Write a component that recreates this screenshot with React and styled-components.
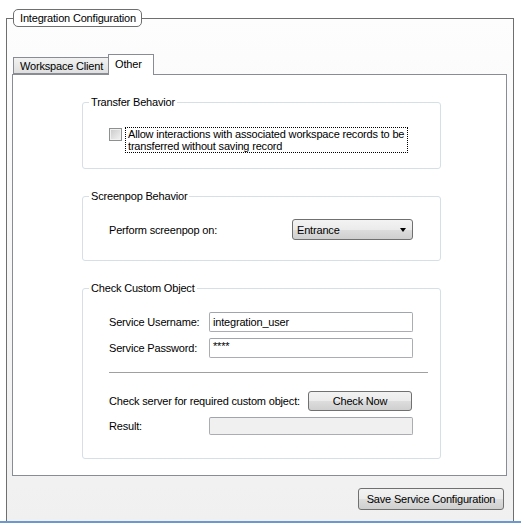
import React from 'react';
import styled, { createGlobalStyle } from 'styled-components';

const GlobalStyle = createGlobalStyle`
  html, body {
    margin: 0;
    padding: 0;
    background: #ffffff;
  }
  body {
    font-family: "Liberation Sans", Arial, sans-serif;
    font-size: 11px;
    letter-spacing: -0.18px;
    color: #000;
  }
`;

const Window = styled.div`
  width: 521px;
  height: 523px;
  box-sizing: border-box;
  padding: 9px 7px 0 6px;
  border-bottom: 2px solid #6b98cf;
  overflow: hidden;
  display: flex;
  flex-direction: column;
`;

const OuterGroup = styled.fieldset`
  flex: 1;
  margin: 0;
  padding: 27px 0 0 0;
  border: 1px solid #6f6f6f;
  border-bottom: none;
  background: linear-gradient(#fdfdfd, #f0f0f0);
  display: flex;
  flex-direction: column;
  min-width: 0;
`;

const OuterLegend = styled.legend`
  margin-left: 6px;
  padding: 0 5px 0 6px;
  height: 18px;
  box-sizing: border-box;
  line-height: 16px;
  border: 1px solid #6f6f6f;
  border-radius: 5px;
  background: #fff;
`;

const TabStrip = styled.div`
  display: flex;
  align-items: flex-end;
  height: 20px;
  margin: 0 6px 0 5px;
  padding-left: 1px;
  position: relative;
  z-index: 1;
`;

const Tab = styled.div`
  box-sizing: border-box;
  height: ${p => (p.$active ? '21px' : '17px')};
  margin-bottom: ${p => (p.$active ? '-1px' : '0')};
  margin-left: ${p => (p.$active ? '-1px' : '0')};
  padding: ${p => (p.$active ? '3px 7px 0 6px' : '2px 5px 0 6px')};
  border: 1px solid #898c95;
  border-bottom: ${p => (p.$active ? 'none' : '1px solid #898c95')};
  background: ${p => (p.$active ? '#fff' : 'linear-gradient(#f2f2f2, #dfdfdf)')};
  width: ${p => p.$width}px;
  white-space: nowrap;
`;

const TabPanel = styled.div`
  margin: 0 6px 0 5px;
  height: 402px;
  box-sizing: border-box;
  border: 1px solid #898c95;
  background: #fff;
  padding: 21px 0 0 69px;
  display: flex;
  flex-direction: column;
  gap: 21px;
`;

const Group = styled.fieldset`
  margin: 0;
  width: 359px;
  height: ${p => p.$h}px;
  box-sizing: border-box;
  border: 1px solid #d5dfe5;
  border-radius: 3px;
  padding: 0;
  min-width: 0;
  flex-shrink: 0;
`;

const GroupLegend = styled.legend`
  margin-left: 6px;
  padding: 0 2px 0 2px;
  line-height: 13px;
`;

const GroupBody = styled.div`
  padding: ${p => p.$pt}px 0 0 26px;
`;

const CheckRow = styled.div`
  display: flex;
  align-items: flex-start;
  gap: 3px;
`;

const CheckBox = styled.span`
  width: 13px;
  height: 13px;
  box-sizing: border-box;
  border: 1px solid #8e8f8f;
  background: linear-gradient(135deg, #c9c9c9, #f4f4f4);
  box-shadow: inset 0 0 0 1px #f1f1f1;
  margin-top: 1px;
  flex-shrink: 0;
`;

const FocusLabel = styled.label`
  box-sizing: border-box;
  width: 283px;
  height: 26px;
  border: 1px dotted #000;
  padding: 0 0 0 2px;
  line-height: 12px;
  white-space: nowrap;
`;

const Row = styled.div`
  display: flex;
  align-items: center;
  height: ${p => p.$h || 20}px;
  margin-top: ${p => p.$mt || 0}px;
`;

const Label = styled.span`
  width: ${p => p.$w || 100}px;
  flex-shrink: 0;
  white-space: nowrap;
`;

const Select = styled.div`
  box-sizing: border-box;
  width: 121px;
  height: 21px;
  border: 1px solid #707070;
  border-radius: 3px;
  background: linear-gradient(#f3f3f3 0%, #ebebeb 50%, #dddddd 51%, #cfcfcf 100%);
  display: flex;
  align-items: center;
  justify-content: space-between;
  padding: 0 6px 0 4px;
  margin-left: 83px;
`;

const Arrow = styled.span`
  width: 0;
  height: 0;
  border-left: 3.5px solid transparent;
  border-right: 3.5px solid transparent;
  border-top: 4px solid #000;
`;

const TextBox = styled.div`
  box-sizing: border-box;
  width: 204px;
  height: ${p => p.$h || 20}px;
  border: 1px solid #abadb3;
  border-top-color: #a0a4ae;
  border-radius: 2px;
  background: ${p => (p.$disabled ? '#f0f0f0' : '#fff')};
  padding: 0 3px;
  display: flex;
  align-items: ${p => (p.$top ? 'flex-start' : 'center')};
  line-height: 14px;
`;

const Separator = styled.div`
  width: 319px;
  height: 1px;
  background: #a0a0a0;
  border-bottom: 1px solid #fff;
  margin-top: 14px;
`;

const PushButton = styled.button`
  box-sizing: border-box;
  width: ${p => p.$w}px;
  height: ${p => p.$h || 21}px;
  border: 1px solid #707070;
  border-radius: 3px;
  background: linear-gradient(#f2f2f2 0%, #ebebeb 50%, #dddddd 51%, #cfcfcf 100%);
  font-family: "Liberation Sans", Arial, sans-serif;
  font-size: 11px;
  letter-spacing: -0.18px;
  color: #000;
  padding: 0;
  margin: 0;
`;

const Footer = styled.div`
  display: flex;
  justify-content: flex-end;
  padding: 12px 9px 0 0;
`;

export default function App() {
  return (
    <>
      <GlobalStyle />
      <Window>
        <OuterGroup>
          <OuterLegend>Integration Configuration</OuterLegend>
          <TabStrip>
            <Tab $width={96}>Workspace Client</Tab>
            <Tab $active $width={46}>Other</Tab>
          </TabStrip>
          <TabPanel>
            <Group $h={73}>
              <GroupLegend>Transfer Behavior</GroupLegend>
              <GroupBody $pt={18}>
                <CheckRow>
                  <CheckBox />
                  <FocusLabel>
                    Allow interactions with associated workspace records to be
                    <br />
                    transferred without saving record
                  </FocusLabel>
                </CheckRow>
              </GroupBody>
            </Group>

            <Group $h={71}>
              <GroupLegend>Screenpop Behavior</GroupLegend>
              <GroupBody $pt={16}>
                <Row $h={21}>
                  <Label $w={100}>Perform screenpop on:</Label>
                  <Select>
                    <span>Entrance</span>
                    <Arrow />
                  </Select>
                </Row>
              </GroupBody>
            </Group>

            <Group $h={177}>
              <GroupLegend>Check Custom Object</GroupLegend>
              <GroupBody $pt={17}>
                <Row>
                  <Label>Service Username:</Label>
                  <TextBox>integration_user</TextBox>
                </Row>
                <Row $mt={6}>
                  <Label>Service Password:</Label>
                  <TextBox $top>****</TextBox>
                </Row>
                <Separator />
                <Row $mt={17} $h={20}>
                  <Label $w={199}>Check server for required custom object:</Label>
                  <PushButton $w={104} $h={20}>Check Now</PushButton>
                </Row>
                <Row $mt={6} $h={18}>
                  <Label>Result:</Label>
                  <TextBox $h={18} $disabled />
                </Row>
              </GroupBody>
            </Group>
          </TabPanel>
          <Footer>
            <PushButton $w={146} $h={22}>Save Service Configuration</PushButton>
          </Footer>
        </OuterGroup>
      </Window>
    </>
  );
}
